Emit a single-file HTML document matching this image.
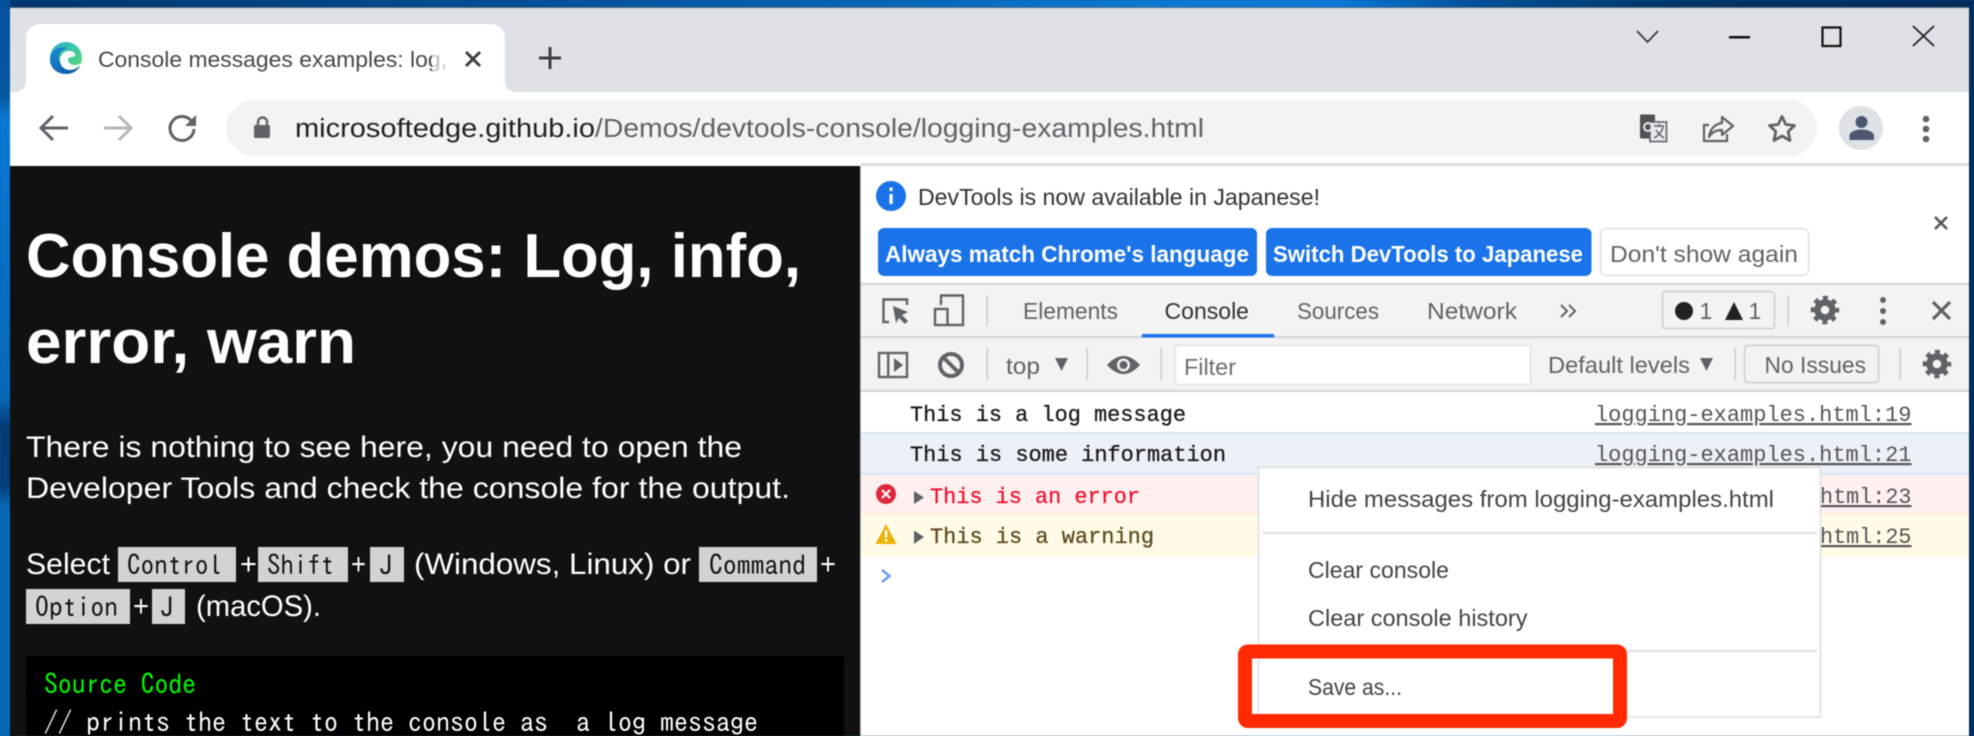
<!DOCTYPE html>
<html><head><meta charset="utf-8"><title>Console messages examples</title>
<style>
html,body{margin:0;padding:0;width:1974px;height:736px;overflow:hidden;background:#0a5cab}
svg{display:block;filter:blur(.6px)}
.s{font-family:"Liberation Sans",sans-serif}
.m{font-family:"Liberation Mono",monospace}
.g{font-family:"IPAGothic","Liberation Mono",monospace}
</style></head><body>
<svg xmlns="http://www.w3.org/2000/svg" width="1974" height="736" viewBox="0 0 1974 736">
<defs>
<linearGradient id="top" x1="0" x2="1" y1="0" y2="0">
<stop offset="0" stop-color="#00336b"/><stop offset=".3" stop-color="#04539c"/><stop offset=".58" stop-color="#0a78d0"/><stop offset=".68" stop-color="#0878d8"/><stop offset=".75" stop-color="#024f96"/><stop offset=".85" stop-color="#013566"/><stop offset="1" stop-color="#012a58"/>
</linearGradient>
<linearGradient id="left" x1="0" x2="0" y1="0" y2="1">
<stop offset="0" stop-color="#05509c"/><stop offset=".13" stop-color="#05589f"/><stop offset=".16" stop-color="#0878d4"/><stop offset=".54" stop-color="#0868b8"/><stop offset=".58" stop-color="#043a72"/><stop offset=".66" stop-color="#043e78"/><stop offset=".69" stop-color="#0868b8"/><stop offset="1" stop-color="#0868b8"/>
</linearGradient>
<linearGradient id="edgeA" x1="0" y1="0" x2="1" y2="1">
<stop offset="0" stop-color="#2aa8c8"/><stop offset=".5" stop-color="#3cc8a0"/><stop offset="1" stop-color="#6ad66a"/>
</linearGradient>
<linearGradient id="edgeB" x1="0" y1="0" x2="1" y2="1">
<stop offset="0" stop-color="#1a90d8"/><stop offset="1" stop-color="#0c4fa0"/>
</linearGradient>
</defs>

<!-- wallpaper -->
<rect width="1974" height="736" fill="#013566"/>
<rect width="1974" height="8" fill="url(#top)"/>
<rect x="0" y="0" width="10" height="736" fill="url(#left)"/>
<rect x="1969" y="0" width="5" height="736" fill="#012c5c"/>
<rect x="10" y="7" width="1959" height="1" fill="#5a6a78"/>

<!-- tab strip -->
<rect x="10" y="8" width="1959" height="84" fill="#dee1e6"/>
<path d="M10 92H14Q26 92 26 80V40Q26 24 42 24H489Q505 24 505 40V80Q505 92 517 92H525V97H10Z" fill="#fff"/>
<circle cx="66" cy="58" r="16" fill="url(#edgeA)"/>
<path d="M50 60C50 49 60 46 67 48C60 50 57 55 60 62C63 70 73 72 80 66C77 72 71 74 66 74C57 74 50 68 50 60Z" fill="url(#edgeB)"/>
<path d="M60 60C60 54 65 50 71 51C76 52 77 57 72 57C67 57 67 62 71 64C74 66 78 65 81 63C79 68 74 70 70 70C64 70 60 66 60 60Z" fill="#fff" opacity=".95"/>
<text class="s" x="98" y="67" font-size="22.5" fill="#45484d" textLength="349" lengthAdjust="spacingAndGlyphs">Console messages examples: log,</text>
<rect x="432" y="40" width="16" height="34" fill="#fff" opacity=".65"/>
<path d="M466 52L480 66M480 52L466 66" stroke="#3c4043" stroke-width="3" fill="none"/>
<path d="M550 47V69M539 58H561" stroke="#3c4043" stroke-width="3" fill="none"/>

<!-- window controls -->
<path d="M1637 31L1647.5 42L1658 31" stroke="#3a3d42" stroke-width="1.8" fill="none"/>
<rect x="1729" y="36" width="21" height="2.5" fill="#111"/>
<rect x="1822.5" y="27.5" width="18" height="18.5" stroke="#111" stroke-width="2.2" fill="none"/>
<path d="M1913 26L1934 46M1934 26L1913 46" stroke="#222" stroke-width="1.8" fill="none"/>

<!-- toolbar -->
<rect x="10" y="92" width="1959" height="74" fill="#fff"/>
<rect x="861" y="163" width="1108" height="3" fill="#dcdde0"/>
<path d="M68 128H42M53 116L41 128L53 140" stroke="#5f6368" stroke-width="3" fill="none"/>
<path d="M104 128H130M119 116L131 128L119 140" stroke="#b4b7bb" stroke-width="3" fill="none"/>
<path d="M191 120.5A12 12 0 1 0 194 129" stroke="#5f6368" stroke-width="3" fill="none"/>
<polygon points="196,115 196,126 185,126" fill="#5f6368"/>
<rect x="226" y="100" width="1591" height="56" rx="28" fill="#f1f3f4"/>
<path d="M258 126V122A4.5 4.5 0 0 1 267 122V126" stroke="#5f6368" stroke-width="2.4" fill="none"/>
<rect x="254" y="125" width="16" height="13" rx="1.5" fill="#5f6368"/>
<text class="s" x="295" y="137" font-size="25.5" fill="#202124" textLength="300" lengthAdjust="spacingAndGlyphs">microsoftedge.github.io</text>
<text class="s" x="595" y="137" font-size="25.5" fill="#5f6368" textLength="609" lengthAdjust="spacingAndGlyphs">/Demos/devtools-console/logging-examples.html</text>

<!-- translate -->
<rect x="1640" y="114.5" width="15" height="24" rx="1" fill="#4f5358"/>
<rect x="1650" y="122" width="16.5" height="19.5" fill="#e8eaed" stroke="#5f6368" stroke-width="1.6"/>
<circle cx="1648" cy="127" r="4" fill="none" stroke="#e8eaed" stroke-width="2"/>
<path d="M1654 126H1664M1659 124V127M1663 127C1662 132 1658 136 1654 138M1656 130C1658 133 1661 136 1664 138" stroke="#5f6368" stroke-width="1.5" fill="none"/>
<!-- share -->
<path d="M1709 125H1704V141H1727V134" stroke="#5f6368" stroke-width="2.2" fill="none"/>
<path d="M1722 117L1733 126L1722 135V130C1716 130 1712 132 1709 137C1710 129 1715 124 1722 123Z" stroke="#5f6368" stroke-width="2.2" fill="none" stroke-linejoin="round"/>
<!-- star -->
<polygon points="1782,116.5 1785.8,124.5 1794.5,125.5 1788.2,131.5 1790,140.5 1782,136 1774,140.5 1775.8,131.5 1769.5,125.5 1778.2,124.5" stroke="#5f6368" stroke-width="2.8" fill="none" stroke-linejoin="round"/>
<!-- avatar -->
<circle cx="1861" cy="128" r="22" fill="#dee1e6"/>
<circle cx="1861.5" cy="122" r="6" fill="#4d5870"/>
<path d="M1849.5 140V136C1849.5 131 1857 129.5 1861.5 129.5S1874 131 1874 136V140Z" fill="#4d5870"/>
<circle cx="1926" cy="119" r="3.3" fill="#5f6368"/><circle cx="1926" cy="129" r="3.3" fill="#5f6368"/><circle cx="1926" cy="139" r="3.3" fill="#5f6368"/>

<!-- page -->
<rect x="10" y="166" width="850" height="570" fill="#111"/>
<text class="s" x="26" y="277" font-size="62" font-weight="700" fill="#fff" textLength="775" lengthAdjust="spacingAndGlyphs">Console demos: Log, info,</text>
<text class="s" x="26" y="363" font-size="62" font-weight="700" fill="#fff" textLength="330" lengthAdjust="spacingAndGlyphs">error, warn</text>
<text class="s" x="26" y="457" font-size="29.5" fill="#fff" textLength="716" lengthAdjust="spacingAndGlyphs">There is nothing to see here, you need to open the</text>
<text class="s" x="26" y="498" font-size="29.5" fill="#fff" textLength="764" lengthAdjust="spacingAndGlyphs">Developer Tools and check the console for the output.</text>

<text class="s" x="26" y="574" font-size="29.5" fill="#fff" textLength="84" lengthAdjust="spacingAndGlyphs">Select</text>
<rect x="118" y="547" width="118" height="35" fill="#d3d3d3"/>
<text class="g" x="127" y="575" font-size="27" fill="#111" textLength="95" lengthAdjust="spacingAndGlyphs">Control</text>
<text class="s" x="240" y="574" font-size="29.5" fill="#fff" textLength="17" lengthAdjust="spacingAndGlyphs">+</text>
<rect x="258" y="547" width="90" height="35" fill="#d3d3d3"/>
<text class="g" x="267" y="575" font-size="27" fill="#111" textLength="67" lengthAdjust="spacingAndGlyphs">Shift</text>
<text class="s" x="351" y="574" font-size="29.5" fill="#fff" textLength="15" lengthAdjust="spacingAndGlyphs">+</text>
<rect x="370" y="547" width="34" height="35" fill="#d3d3d3"/>
<text class="g" x="379" y="575" font-size="27" fill="#111" textLength="14" lengthAdjust="spacingAndGlyphs">J</text>
<text class="s" x="414" y="574" font-size="29.5" fill="#fff" textLength="277" lengthAdjust="spacingAndGlyphs">(Windows, Linux) or</text>
<rect x="699" y="547" width="118" height="35" fill="#d3d3d3"/>
<text class="g" x="709" y="575" font-size="27" fill="#111" textLength="97" lengthAdjust="spacingAndGlyphs">Command</text>
<text class="s" x="820" y="574" font-size="29.5" fill="#fff" textLength="16" lengthAdjust="spacingAndGlyphs">+</text>

<rect x="26" y="589" width="104" height="35" fill="#d3d3d3"/>
<text class="g" x="35" y="617" font-size="27" fill="#111" textLength="83" lengthAdjust="spacingAndGlyphs">Option</text>
<text class="s" x="133" y="616" font-size="29.5" fill="#fff" textLength="16" lengthAdjust="spacingAndGlyphs">+</text>
<rect x="152" y="589" width="33" height="35" fill="#d3d3d3"/>
<text class="g" x="160" y="617" font-size="27" fill="#111" textLength="14" lengthAdjust="spacingAndGlyphs">J</text>
<text class="s" x="196" y="616" font-size="29.5" fill="#fff" textLength="125" lengthAdjust="spacingAndGlyphs">(macOS).</text>

<rect x="26" y="656" width="818" height="80" fill="#000"/>
<text class="g" x="44" y="694" font-size="27.5" fill="#0f0" textLength="152" lengthAdjust="spacingAndGlyphs">Source Code</text>
<text class="g" x="44" y="732" font-size="27.5" fill="#fff" textLength="714" lengthAdjust="spacingAndGlyphs" xml:space="preserve">// prints the text to the console as  a log message</text>

<!-- devtools -->
<rect x="860" y="166" width="1" height="570" fill="#bbb"/>
<rect x="861" y="166" width="1108" height="570" fill="#fff"/>
<circle cx="891" cy="196" r="15" fill="#1a73e8"/>
<rect x="889.5" y="194" width="3.2" height="10" fill="#fff"/><rect x="889.5" y="187.5" width="3.2" height="3.5" fill="#fff"/>
<text class="s" x="918" y="205" font-size="23.5" fill="#333" textLength="402" lengthAdjust="spacingAndGlyphs">DevTools is now available in Japanese!</text>
<rect x="878" y="228" width="379" height="48" rx="6" fill="#1a73e8"/>
<text class="s" x="885" y="262" font-size="23.5" font-weight="700" fill="#fff" textLength="364" lengthAdjust="spacingAndGlyphs">Always match Chrome's language</text>
<rect x="1266" y="228" width="325.5" height="48" rx="6" fill="#1a73e8"/>
<text class="s" x="1273" y="262" font-size="23.5" font-weight="700" fill="#fff" textLength="310" lengthAdjust="spacingAndGlyphs">Switch DevTools to Japanese</text>
<rect x="1600.5" y="228.5" width="208" height="47" rx="6" fill="#fff" stroke="#dfe1e5" stroke-width="1.5"/>
<text class="s" x="1610" y="262" font-size="23.5" fill="#5f6368" textLength="188" lengthAdjust="spacingAndGlyphs">Don't show again</text>
<path d="M1935 217L1947 229M1947 217L1935 229" stroke="#555" stroke-width="2.6" fill="none"/>

<rect x="861" y="283" width="1108" height="2" fill="#d0d2d6"/>
<rect x="861" y="285" width="1108" height="52" fill="#f3f3f3"/>
<rect x="861" y="336" width="1108" height="2" fill="#d0d2d6"/>
<rect x="861" y="338" width="1108" height="52" fill="#f3f3f3"/>
<rect x="861" y="390" width="1108" height="2" fill="#d0d2d6"/>

<!-- tabs row -->
<path d="M889 322H883.5V299.5H907V305" stroke="#5f6368" stroke-width="2.4" fill="none"/>
<polygon points="893,306 908,312 902,315 908,321 905,324 899,318 896,323" fill="#5f6368"/>
<path d="M941 305V295.5H963V325H948" stroke="#5f6368" stroke-width="2.4" fill="none"/>
<rect x="935" y="309" width="12.5" height="16" stroke="#5f6368" stroke-width="2.4" fill="none"/>
<rect x="986.5" y="295" width="1.5" height="31" fill="#ccc"/>
<text class="s" x="1023" y="319" font-size="23" fill="#5f6368" textLength="95" lengthAdjust="spacingAndGlyphs">Elements</text>
<text class="s" x="1164.500" y="319" font-size="23" fill="#333" textLength="84.500" lengthAdjust="spacingAndGlyphs">Console</text>
<rect x="1142" y="334" width="132" height="3.5" fill="#1a73e8"/>
<text class="s" x="1297" y="319" font-size="23" fill="#5f6368" textLength="82" lengthAdjust="spacingAndGlyphs">Sources</text>
<text class="s" x="1427" y="319" font-size="23" fill="#5f6368" textLength="90" lengthAdjust="spacingAndGlyphs">Network</text>
<path d="M1561 305L1567 311L1561 317M1569 305L1575 311L1569 317" stroke="#5f6368" stroke-width="2" fill="none"/>

<rect x="1662.5" y="291.5" width="112" height="37" rx="3" fill="#f3f3f3" stroke="#ccc" stroke-width="1.5"/>
<circle cx="1684" cy="311" r="9" fill="#202124"/>
<text class="s" x="1699.500" y="319" font-size="23" fill="#5f6368">1</text>
<polygon points="1734,302 1743,320 1725,320" fill="#202124"/>
<text class="s" x="1748.500" y="319" font-size="23" fill="#5f6368">1</text>
<rect x="1787.5" y="295" width="1.5" height="31" fill="#ccc"/>
<circle cx="1825" cy="310" r="7.5" stroke="#5f6368" stroke-width="6.5" fill="none"/>
<circle cx="1825" cy="310" r="12" stroke="#5f6368" stroke-width="4.5" fill="none" stroke-dasharray="4.9 4.52" stroke-dashoffset="2.45"/>
<circle cx="1883" cy="300" r="3" fill="#5f6368"/><circle cx="1883" cy="311" r="3" fill="#5f6368"/><circle cx="1883" cy="322" r="3" fill="#5f6368"/>
<path d="M1933 302L1950 319M1950 302L1933 319" stroke="#5f6368" stroke-width="3.2" fill="none"/>

<!-- console toolbar -->
<rect x="879" y="353" width="28" height="24" stroke="#5f6368" stroke-width="2.4" fill="none"/>
<rect x="887" y="353" width="2.4" height="24" fill="#5f6368"/>
<polygon points="894,358 894,372 903,365" fill="#5f6368"/>
<circle cx="951" cy="365" r="11" stroke="#5f6368" stroke-width="4" fill="none"/>
<path d="M943 357L959 373" stroke="#5f6368" stroke-width="4"/>
<rect x="986.5" y="348" width="1.5" height="32" fill="#ccc"/>
<text class="s" x="1006" y="374" font-size="23" fill="#5f6368" textLength="34" lengthAdjust="spacingAndGlyphs">top</text>
<polygon points="1055,358 1068,358 1061.5,371" fill="#5f6368"/>
<rect x="1086.5" y="348" width="1.5" height="32" fill="#ccc"/>
<path d="M1107 365Q1123.5 347 1140 365Q1123.5 383 1107 365Z" fill="#5f6368"/>
<circle cx="1123.5" cy="365" r="6.5" fill="#f3f3f3"/><circle cx="1123.5" cy="365" r="4" fill="#5f6368"/>
<rect x="1160.5" y="348" width="1.5" height="32" fill="#ccc"/>
<rect x="1175.5" y="345.5" width="355" height="39" fill="#fff" stroke="#e2e3e5" stroke-width="1.5"/>
<text class="s" x="1184" y="375" font-size="23" fill="#6e6e6e" textLength="52" lengthAdjust="spacingAndGlyphs">Filter</text>
<text class="s" x="1548" y="373" font-size="23" fill="#5f6368" textLength="142" lengthAdjust="spacingAndGlyphs">Default levels</text>
<polygon points="1700,358 1713,358 1706.5,371" fill="#5f6368"/>
<rect x="1734.5" y="348" width="1.5" height="32" fill="#ccc"/>
<rect x="1744.5" y="345.5" width="134" height="37" rx="3" fill="#f3f3f3" stroke="#ccc" stroke-width="1.5"/>
<text class="s" x="1764.500" y="373" font-size="23" fill="#5f6368" textLength="101.500" lengthAdjust="spacingAndGlyphs">No Issues</text>
<rect x="1899.5" y="348" width="1.5" height="32" fill="#ccc"/>
<circle cx="1937" cy="364" r="7.5" stroke="#5f6368" stroke-width="6.5" fill="none"/>
<circle cx="1937" cy="364" r="12" stroke="#5f6368" stroke-width="4.5" fill="none" stroke-dasharray="4.9 4.52" stroke-dashoffset="2.45"/>

<!-- console rows -->
<rect x="861" y="432" width="1108" height="1.5" fill="#d3e2f6"/>
<rect x="861" y="433.5" width="1108" height="40" fill="#ecf1f8"/>
<rect x="861" y="473" width="1108" height="1.5" fill="#d3e2f6"/>
<rect x="861" y="474.5" width="1108" height="40" fill="#fff0f0"/>
<rect x="861" y="514" width="1108" height="41" fill="#fffbe6"/>
<rect x="861" y="514" width="1108" height="1" fill="#fdf3d0"/>
<rect x="861" y="555" width="1108" height="1" fill="#fdf3d0"/>

<text class="m" x="910" y="421" font-size="22" fill="#1a1a1a" stroke="#1a1a1a" stroke-width=".3" textLength="276" lengthAdjust="spacingAndGlyphs">This is a log message</text>
<text class="m" x="910" y="461" font-size="22" fill="#1a1a1a" stroke="#1a1a1a" stroke-width=".3" textLength="316" lengthAdjust="spacingAndGlyphs">This is some information</text>
<circle cx="886" cy="494" r="10" fill="#e0283c"/>
<path d="M882 490L890 498M890 490L882 498" stroke="#fff" stroke-width="2.2"/>
<polygon points="914,491 914,504 924,497.5" fill="#5f6368"/>
<text class="m" x="930" y="503" font-size="22" fill="#f0102c" stroke="#f0102c" stroke-width=".25" textLength="210" lengthAdjust="spacingAndGlyphs">This is an error</text>
<polygon points="886,524 896.5,544 875.5,544" fill="#eab308"/>
<rect x="884.8" y="530" width="2.4" height="7.5" fill="#fff"/><rect x="884.8" y="539" width="2.4" height="2.5" fill="#fff"/>
<polygon points="914,530.5 914,544 924,537" fill="#5f6368"/>
<text class="m" x="930" y="543" font-size="22" fill="#5c4a1e" stroke="#5c4a1e" stroke-width=".25" textLength="224" lengthAdjust="spacingAndGlyphs">This is a warning</text>
<path d="M882 570L889.5 576L882 582" stroke="#6b9bf0" stroke-width="2.6" fill="none"/>

<text class="m" x="1595" y="421" font-size="22" fill="#555" text-decoration="underline" textLength="316.5" lengthAdjust="spacingAndGlyphs">logging-examples.html:19</text>
<text class="m" x="1595" y="461" font-size="22" fill="#555" text-decoration="underline" textLength="316.5" lengthAdjust="spacingAndGlyphs">logging-examples.html:21</text>
<text class="m" x="1820" y="503" font-size="22" fill="#555" text-decoration="underline" textLength="91.5" lengthAdjust="spacingAndGlyphs">html:23</text>
<text class="m" x="1820" y="543" font-size="22" fill="#555" text-decoration="underline" textLength="91.5" lengthAdjust="spacingAndGlyphs">html:25</text>

<!-- context menu -->
<rect x="1258.5" y="467.5" width="562" height="249.5" fill="#fff" stroke="#dcdde0" stroke-width="1.5"/>
<text class="s" x="1308" y="507" font-size="23" fill="#444" textLength="466" lengthAdjust="spacingAndGlyphs">Hide messages from logging-examples.html</text>
<rect x="1262" y="532" width="555" height="2" fill="#dddfe4"/>
<text class="s" x="1308" y="578" font-size="23" fill="#444" textLength="141" lengthAdjust="spacingAndGlyphs">Clear console</text>
<text class="s" x="1308" y="626" font-size="23" fill="#444" textLength="219.5" lengthAdjust="spacingAndGlyphs">Clear console history</text>
<rect x="1262" y="650" width="555" height="2" fill="#dddfe4"/>
<text class="s" x="1308" y="695" font-size="23" fill="#444" textLength="94" lengthAdjust="spacingAndGlyphs">Save as...</text>

<!-- red box -->
<rect x="1245" y="651.5" width="375" height="69.5" rx="3" fill="none" stroke="#ff2a00" stroke-width="14" stroke-linejoin="round"/>
</svg>
</body></html>
